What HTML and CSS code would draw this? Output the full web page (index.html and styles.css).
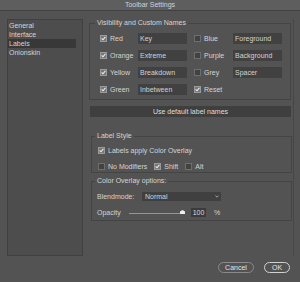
FILE: index.html
```html
<!DOCTYPE html>
<html>
<head>
<meta charset="utf-8">
<title>Toolbar Settings</title>
<link rel="stylesheet" href="styles.css">
</head>
<body>
<div class="titlebar">Toolbar Settings</div>
<div class="main">
  <ul class="sidebar">
    <li>General</li>
    <li>Interface</li>
    <li class="sel">Labels</li>
    <li>Onionskin</li>
  </ul>
  <div class="content">
    <fieldset class="fs fs-names">
      <legend>Visibility and Custom Names</legend>
      <div class="names">
        <label class="chk"><span class="cb on"><svg viewBox="0 0 5 5"><path d="M0.6 2.4 L2 3.8 L4.4 0.9"/></svg></span>Red</label>
        <input class="txt" value="Key">
        <span></span>
        <label class="chk"><span class="cb"></span>Blue</label>
        <input class="txt" value="Foreground">

        <label class="chk"><span class="cb on"><svg viewBox="0 0 5 5"><path d="M0.6 2.4 L2 3.8 L4.4 0.9"/></svg></span>Orange</label>
        <input class="txt" value="Extreme">
        <span></span>
        <label class="chk"><span class="cb"></span>Purple</label>
        <input class="txt" value="Background">

        <label class="chk"><span class="cb on"><svg viewBox="0 0 5 5"><path d="M0.6 2.4 L2 3.8 L4.4 0.9"/></svg></span>Yellow</label>
        <input class="txt" value="Breakdown">
        <span></span>
        <label class="chk"><span class="cb"></span>Grey</label>
        <input class="txt" value="Spacer">

        <label class="chk"><span class="cb on"><svg viewBox="0 0 5 5"><path d="M0.6 2.4 L2 3.8 L4.4 0.9"/></svg></span>Green</label>
        <input class="txt" value="Inbetween">
        <span></span>
        <label class="chk"><span class="cb on"><svg viewBox="0 0 5 5"><path d="M0.6 2.4 L2 3.8 L4.4 0.9"/></svg></span>Reset</label>
        <span></span>
      </div>
    </fieldset>

    <div class="btn-default">Use default label names</div>

    <fieldset class="fs fs-style">
      <legend>Label Style</legend>
      <div class="rows">
        <div class="row">
          <label class="chk"><span class="cb on"><svg viewBox="0 0 5 5"><path d="M0.6 2.4 L2 3.8 L4.4 0.9"/></svg></span>Labels apply Color Overlay</label>
        </div>
        <div class="row">
          <label class="chk"><span class="cb"></span>No Modifiers</label>
          <label class="chk"><span class="cb on"><svg viewBox="0 0 5 5"><path d="M0.6 2.4 L2 3.8 L4.4 0.9"/></svg></span>Shift</label>
          <label class="chk"><span class="cb"></span>Alt</label>
        </div>
      </div>
    </fieldset>

    <fieldset class="fs fs-overlay">
      <legend>Color Overlay options:</legend>
      <div class="blend">
        <span class="lbl">Blendmode:</span>
        <div class="select"><span>Normal</span><svg class="chev" viewBox="0 0 4 3"><path d="M0.4 0.6 L2 2.2 L3.6 0.6"/></svg></div>
      </div>
      <div class="opacity">
        <span class="lbl">Opacity</span>
        <div class="slider">
          <div class="track"></div>
          <svg class="handle" viewBox="0 0 5 4"><polygon points="0,4 0,1.6 2.5,0 5,1.6 5,4"/></svg>
        </div>
        <div class="num">100</div>
        <span class="pct">%</span>
      </div>
    </fieldset>
  </div>
</div>
<div class="footer">
  <div class="pill cancel">Cancel</div>
  <div class="pill ok">OK</div>
</div>
</body>
</html>
```
FILE: styles.css
```css
* { box-sizing: border-box; }
html, body { margin: 0; }
body {
  width: 300px;
  height: 282px;
  overflow: hidden;
  background: #535353;
  font-family: "Liberation Sans", Arial, sans-serif;
  font-size: 7px;
  line-height: 8px;
  color: #d4d4d4;
}
.titlebar {
  height: 11px;
  line-height: 10px;
  text-align: center;
  background: #5e5e5e;
  border-bottom: 1px solid #414141;
  color: #d2d2d2;
}
.main {
  display: flex;
  height: 245px;
  padding: 8px 6px 0 7px;
}
.sidebar {
  width: 76px;
  margin: 0;
  padding: 1px 6px 0 0;
  list-style: none;
  background: #4d4d4d;
  border: 1px solid #404040;
}
.sidebar li {
  height: 9px;
  line-height: 9px;
  padding-left: 1px;
}
.sidebar .sel { background: #383838; }
.content {
  flex: 1;
  display: flex;
  flex-direction: column;
  border-right: 1px solid #474747;
}
.fs {
  border: 1px solid #444444;
  margin: 0;
  padding: 0;
  min-width: 0;
}
.fs legend {
  padding: 0 2px;
  line-height: 8px;
}
.fs-names { margin: 0 2px 0 6px; padding-bottom: 4px; }
.fs-names legend { margin-left: 5px; }
.names {
  display: grid;
  grid-template-columns: 38px 49px 7px 39px 49px;
  grid-auto-rows: 11px;
  row-gap: 6px;
  align-items: center;
  margin: 6px 0 0 10px;
}
.chk {
  display: flex;
  align-items: center;
  gap: 3px;
  white-space: nowrap;
}
.cb {
  flex: none;
  width: 7px;
  height: 7px;
  border: 1px solid #6e6e6e;
  background: #424242;
  display: flex;
  align-items: center;
  justify-content: center;
}
.cb.on { background: #777777; border-color: #9a9a9a; }
.cb svg { width: 5px; height: 5px; display: block; }
.cb svg path { fill: none; stroke: #ececec; stroke-width: 1.1; }
.txt {
  width: 49px;
  height: 11px;
  border: 0;
  margin: 0;
  padding: 0 2px;
  background: #414141;
  color: #d2d2d2;
  font: inherit;
  line-height: 11px;
  outline: none;
}
.btn-default {
  margin: 6px 2px 0 7px;
  height: 11px;
  line-height: 11px;
  text-align: center;
  background: #3f3f3f;
  color: #dedede;
}
.fs-style { margin: 15px 1px 0 8px; padding-bottom: 1px; }
.fs-style legend, .fs-overlay legend { margin-left: 3px; }
.rows {
  display: flex;
  flex-direction: column;
  gap: 7px;
  margin: 6px 0 0 6px;
}
.row {
  display: flex;
  align-items: center;
  gap: 7px;
  height: 9px;
}
.fs-overlay { margin: 4px 1px 0 8px; padding-bottom: 3px; }
.blend, .opacity {
  display: flex;
  align-items: center;
  height: 9px;
  margin: 7px 0 0 5px;
}
.blend .lbl { width: 45px; }
.opacity .lbl { width: 32px; }
.select {
  width: 79px;
  height: 9px;
  background: #404040;
  display: flex;
  align-items: center;
  justify-content: space-between;
  padding: 0 2px 0 3px;
}
.chev { width: 4px; height: 3px; display: block; }
.chev path { fill: none; stroke: #bcbcbc; stroke-width: 0.8; }
.slider {
  position: relative;
  width: 54px;
  height: 9px;
}
.track {
  position: absolute;
  left: 0;
  right: 0;
  top: 5px;
  height: 1px;
  background: #959595;
}
.handle {
  position: absolute;
  left: 51px;
  top: 2px;
  width: 5px;
  height: 4px;
  display: block;
}
.handle polygon { fill: #eeeeee; }
.num {
  width: 15px;
  height: 9px;
  margin-left: 8px;
  background: #3b3b3b;
  text-align: center;
  line-height: 9px;
  color: #dddddd;
}
.pct { margin-left: 8px; }
.footer {
  display: flex;
  justify-content: flex-end;
  gap: 10px;
  padding: 6px 10px 0 0;
}
.pill {
  height: 11px;
  line-height: 9px;
  border: 1px solid #8a8a8a;
  border-radius: 6px;
  text-align: center;
  color: #e2e2e2;
}
.cancel { width: 36px; }
.ok { width: 26px; border-color: #d2d2d2; }
```
